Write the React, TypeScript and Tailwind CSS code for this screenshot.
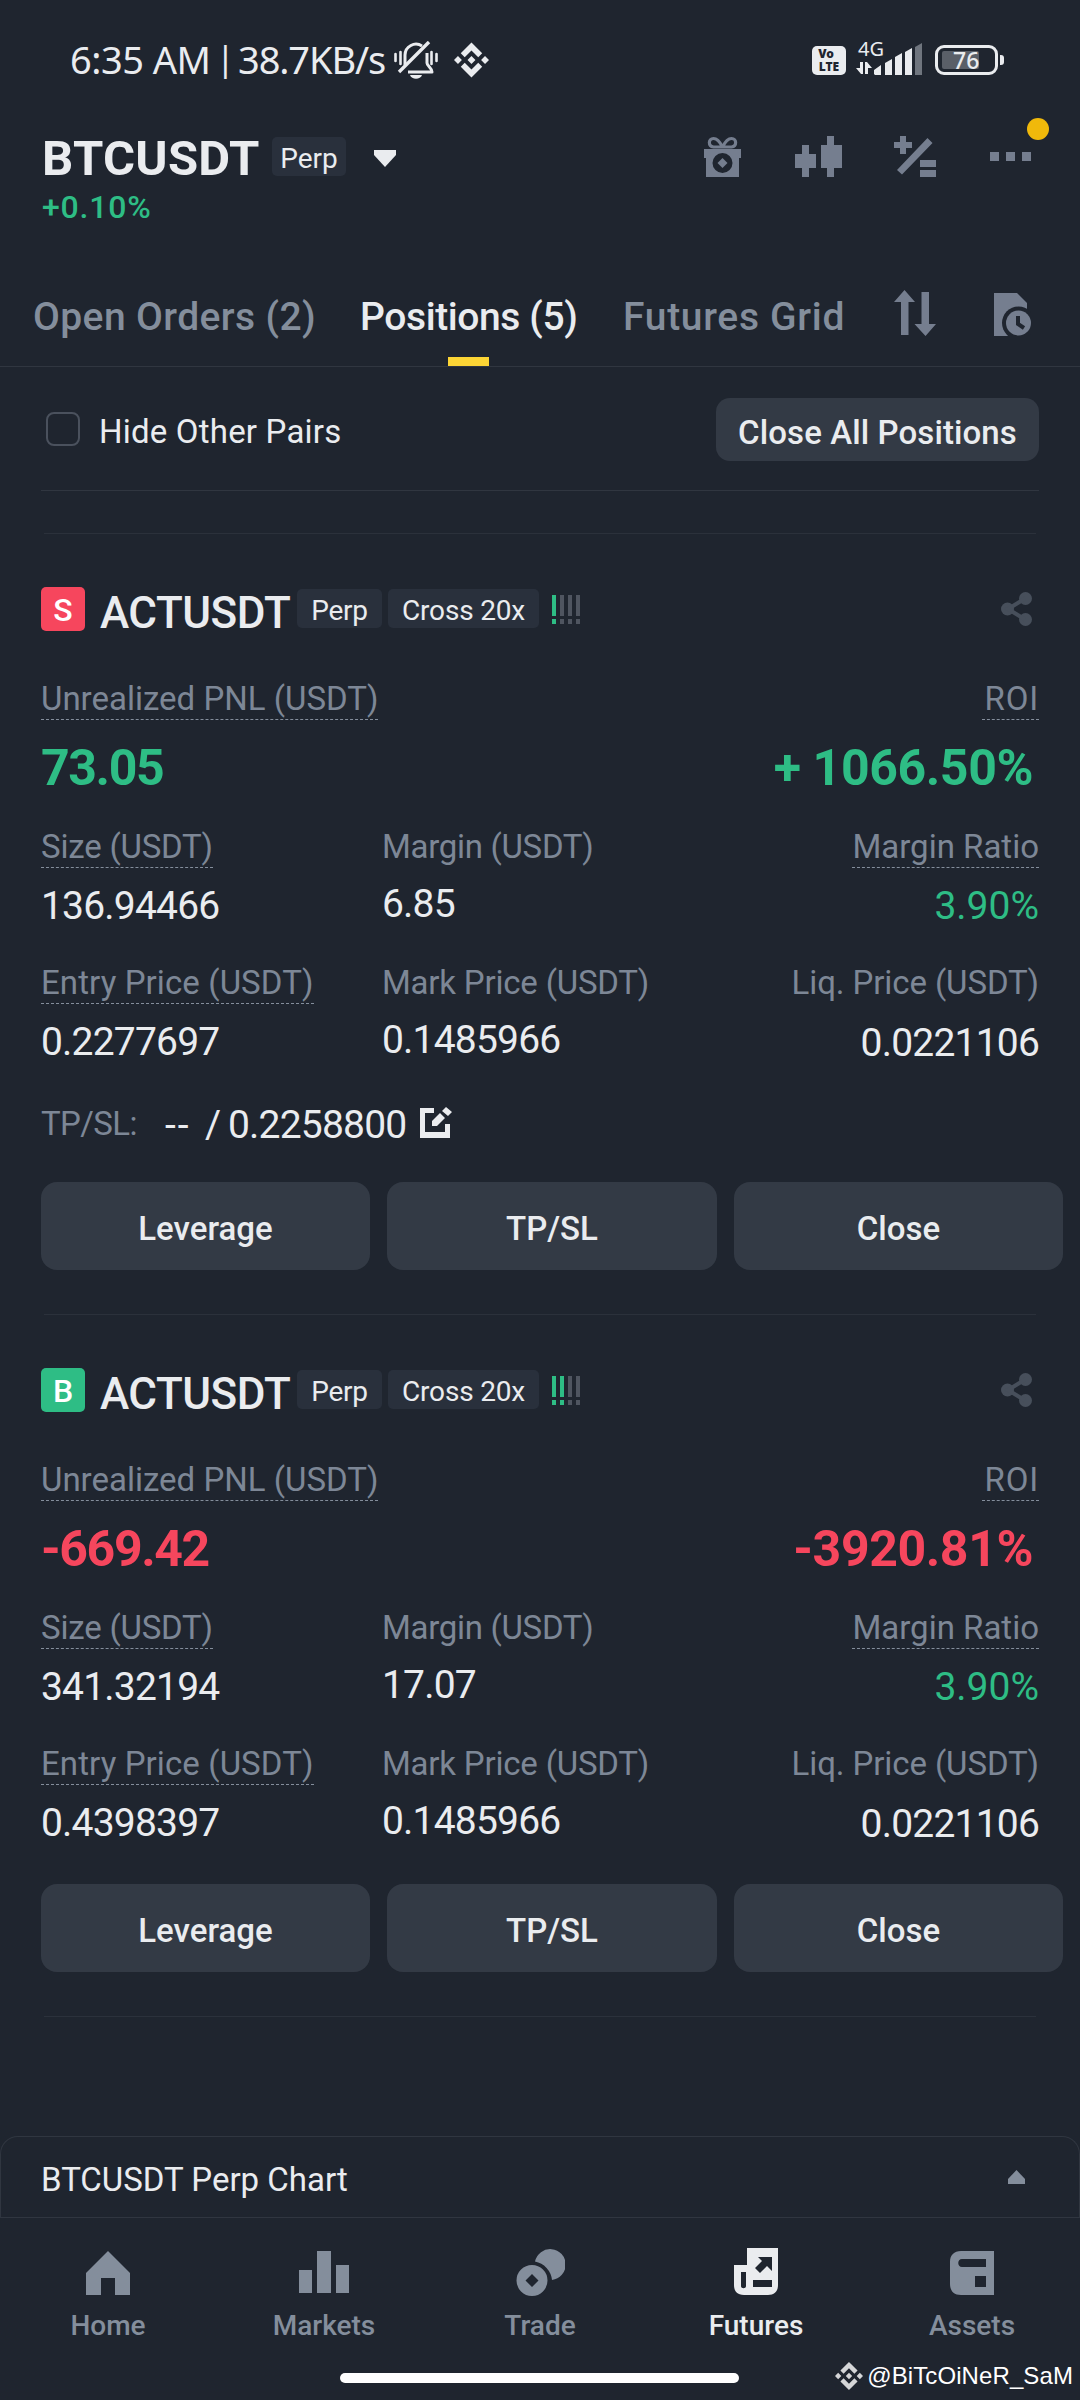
import React from "react";
import { SiBinance } from "react-icons/si";

type Position = {
  side: "S" | "B";
  risk: number;
  pnl: string;
  roi: string;
  size: string;
  margin: string;
  entry: string;
  tpsl?: string;
};

const positions: Position[] = [
  {
    side: "S",
    risk: 1,
    pnl: "73.05",
    roi: "+ 1066.50%",
    size: "136.94466",
    margin: "6.85",
    entry: "0.2277697",
    tpsl: "0.2258800",
  },
  {
    side: "B",
    risk: 2,
    pnl: "-669.42",
    roi: "-3920.81%",
    size: "341.32194",
    margin: "17.07",
    entry: "0.4398397",
  },
];

function StatusBar() {
  return (
    <div className="flex h-[120px] items-center pl-[70px] pr-[76px] text-[#eaecef]">
      <div className="flex -mt-[3px] text-[38px] leading-none font-['Noto_Sans',sans-serif] whitespace-nowrap">
        <span className="w-[146px] tracking-[-0.5px]">6:35 AM</span>
        <span className="w-[22px] -mt-px text-[34px] leading-[38px]">|</span>
        <span className="w-[156px] tracking-[-1.1px]">38.7KB/s</span>
      </div>
      <svg width="44" height="38" viewBox="0 0 44 38" fill="none" stroke="currentColor" strokeWidth="3">
        <path d="M11 24V14a11 11 0 0 1 17-9M33 12v10c0 3 5 5 5 9H14" strokeLinejoin="round" />
        <path d="M5 31 35 1" strokeWidth="3.4" />
        <path d="M1.5 13v7M6.5 11v12M37.500 11v12M42.500 13v7" strokeWidth="2.6" strokeLinecap="round" />
        <path d="M16 34h12c-1.500 5-10.500 5-12 0z" fill="currentColor" stroke="none" />
      </svg>
      <SiBinance className="ml-4 h-[36px] w-[35px]" />
      <div className="ml-auto flex items-center">
        <div className="flex h-[29px] w-[34px] flex-col items-center justify-center rounded-[5px] bg-[#eaecef] font-['Noto_Sans',sans-serif] font-black text-[#1f252f]">
          <span className="-ml-1.5 text-[12px] leading-[13px]">Vo</span>
          <span className="text-[12px] leading-[13px]">LTE</span>
        </div>
        <div className="relative ml-2.5 h-[36px] w-[67px] -mt-1">
          <span className="absolute left-0.5 -top-px text-[20px] leading-[20px] font-['Noto_Sans',sans-serif]">4G</span>
          <svg width="67" height="36" viewBox="0 0 67 36" fill="currentColor">
            <path d="M4 22h3v12H5L0 28h4zM9 22h2l5 6h-4v6H9z" />
            <path d="M18 34v-4l7-5v10h-6zM29 35V23l7-4v16zM39 35V17l7-4v22zM49 35V12l7-4v27z" />
            <path d="M59 35V7l7-4v32z" fill="#6f757e" />
          </svg>
        </div>
        <div className="ml-3 flex h-[30px] w-[63px] items-center rounded-[9px] border-3 border-[#eaecef] pl-1">
          <div className="h-[18px] w-[37px] rounded-[2px] bg-[#5a5f68] pl-[11px] text-[23px] font-medium leading-[18px] font-['Noto_Sans',sans-serif]">
            76
          </div>
        </div>
        <div className="ml-0.5 h-2.5 w-1 rounded-r-[3px] bg-[#eaecef]"></div>
      </div>
    </div>
  );
}

function Header() {
  return (
    <div className="h-[146px] pl-[42px]">
      <div className="flex h-[76px] items-center">
        <h1 className="w-[230px] text-[49px] font-bold leading-none tracking-[0.3px]">BTCUSDT</h1>
        <span className="-mt-[3px] h-[39px] w-[74px] rounded-[5px] bg-[#29303c] pt-[3px] text-center text-[28px] leading-[38px]">
          Perp
        </span>
        <svg className="ml-7" width="22" height="17" viewBox="0 0 22 17" fill="#eaecef">
          <path d="M0 0h22v5L11 17 0 5z" />
        </svg>
        <div className="relative ml-auto mr-[49px] -mt-[3px] flex items-center text-[#757e8f]">
          <svg width="37" height="41" viewBox="0 0 37 41" fill="currentColor">
            <path
              d="M18.500 11C15 4 12 2.500 9.500 2.500c-5.500 0-5.500 8 0 8.500zM18.500 11C22 4 25 2.500 27.500 2.500c5.500 0 5.500 8 0 8.500z"
              fill="none"
              stroke="currentColor"
              strokeWidth="3.2"
            />
            <path
              fillRule="evenodd"
              d="M0 13h37v9h-2v19H2V22H0zM18.500 17a10 10 0 1 0 0 20 10 10 0 1 0 0-20z"
            />
            <path d="m18.500 22 5 5-5 5-5-5z" />
          </svg>
          <svg className="ml-[54px]" width="47" height="41" viewBox="0 0 47 41" fill="currentColor">
            <path d="M7 9h7v9h7v14h-7v9H7v-9H0V18h7zM32 0h7v9h8v23h-8v9h-7v-9h-6V9h6z" />
          </svg>
          <svg className="ml-[52px]" width="42" height="41" viewBox="0 0 42 41" fill="currentColor">
            <path d="M6 0h6v6h6v6h-6v6H6v-6H0V6h6zM33.500 2 38.500 7 8 38.500 3 34zM26 24h16v7H26zM26 34h16v7H26z" />
          </svg>
          <svg className="ml-[54px]" width="41" height="9" viewBox="0 0 41 9" fill="currentColor">
            <path d="M0 0h9v9H0zM16 0h9v9h-9zM32 0h9v9h-9z" />
          </svg>
          <span className="absolute -right-[18px] -top-[18px] size-[22px] rounded-full bg-[#f0b90b]"></span>
        </div>
      </div>
      <p className="-mt-px text-[32px] font-medium leading-6 tracking-[0.8px] text-[#2ebd85]">+0.10%</p>
    </div>
  );
}

function Tabs() {
  return (
    <div className="flex h-[101px] items-center border-b border-[#303640] pl-[33px] pr-[49px] text-[39px] font-medium text-[#848e9c] whitespace-nowrap">
      <span className="w-[327px] pt-0.5 tracking-[0.4px]">Open Orders (2)</span>
      <span className="relative flex h-full w-[263px] items-center pt-0.5 tracking-[-0.4px] text-[#eaecef]">
        Positions (5)
        <span className="absolute bottom-0 left-[88px] h-[9px] w-[41px] bg-[#fcd535]"></span>
      </span>
      <span className="pt-0.5 tracking-[0.7px]">Futures Grid</span>
      <svg className="ml-auto -mt-1.5" width="42" height="46" viewBox="0 0 42 46" fill="#757e8f">
        <path d="M10.500 0 21 12h-6.500v33H7V12H0zM27.500 2h7.500v32h7L31.500 46 20.500 34h7z" />
      </svg>
      <svg className="ml-[58px] -mt-1" width="37" height="43" viewBox="0 0 37 43">
        <path d="M0 0h23l10 10v33H0z" fill="#757e8f" />
        <circle cx="24.500" cy="30" r="16.500" fill="#1f252f" />
        <circle cx="24.500" cy="30" r="12.500" fill="#757e8f" />
        <path d="M24 23v8l6 4" fill="none" stroke="#1f252f" strokeWidth="4" />
      </svg>
    </div>
  );
}

function Filters() {
  return (
    <div className="mx-[41px] flex h-[124px] items-start border-b border-[#303640] text-[33px]">
      <div className="ml-[5px] mt-[45px] size-[34px] rounded-[8px] border-2 border-[#4a515d]"></div>
      <span className="ml-[19px] mt-[45px] leading-10 tracking-[0.2px]">Hide Other Pairs</span>
      <button className="ml-auto mt-[31px] h-[63px] w-[323px] rounded-[14px] bg-[#333a45] pt-1.5 font-medium tracking-[0.1px]">
        Close All Positions
      </button>
    </div>
  );
}

function Label({ children, dashed }: { children: React.ReactNode; dashed?: boolean }) {
  return (
    <div
      className={
        dashed
          ? "h-[41px] border-b border-dashed border-[#848e9c] text-[33px] leading-10 text-[#7d8796]"
          : "h-[41px] text-[33px] leading-10 text-[#7d8796]"
      }
    >
      {children}
    </div>
  );
}

function RiskBars({ level }: { level: number }) {
  return (
    <div className="ml-[13px] flex gap-1">
      {[1, 2, 3, 4].map((n) => (
        <div key={n} className="flex flex-col gap-[3px]">
          <span className={n <= level ? "h-[21px] w-1 bg-[#2ebd85]" : "h-[21px] w-1 bg-[#4f5560]"}></span>
          <span className={n <= level ? "h-[5px] w-1 bg-[#2ebd85]" : "h-[5px] w-1 bg-[#4f5560]"}></span>
        </div>
      ))}
    </div>
  );
}

function PositionCard({ p }: { p: Position }) {
  const short = p.side === "S";
  return (
    <div className="pl-[41px] pt-[53px]">
      <div className="flex h-11 items-center">
        <span
          className={
            short
              ? "size-11 rounded-[5px] bg-[#f6465d] text-center text-[32px] font-medium leading-[46px] text-white"
              : "size-11 rounded-[5px] bg-[#2ebd85] text-center text-[32px] font-medium leading-[46px] text-white"
          }
        >
          {p.side}
        </span>
        <h2 className="ml-[15px] mt-2 w-[197px] text-[44px] font-medium leading-none tracking-[-0.5px]">
          ACTUSDT
        </h2>
        <span className="-mt-px h-[39px] w-[85px] rounded-[5px] bg-[#29303c] pt-[3px] text-center text-[28px] leading-[38px] tracking-[-0.2px]">
          Perp
        </span>
        <span className="-mt-px ml-1.5 h-[39px] w-[151px] rounded-[5px] bg-[#29303c] pt-[3px] text-center text-[28px] leading-[38px] tracking-[-0.2px]">
          Cross 20x
        </span>
        <RiskBars level={p.risk} />
        <svg className="ml-auto mr-12" width="31" height="34" viewBox="0 0 31 34" fill="#474f5b">
          <circle cx="6.500" cy="17" r="6.500" />
          <circle cx="24.500" cy="6.500" r="6.500" />
          <circle cx="24.500" cy="27.500" r="6.500" />
          <path d="M24 6.500 7 17l17 10.500" fill="none" stroke="#474f5b" strokeWidth="4" />
        </svg>
      </div>

      <div className="mr-[41px] mt-12 flex justify-between">
        <Label dashed>Unrealized PNL (USDT)</Label>
        <Label dashed>
          <span className="pl-[3px] tracking-[0.8px]">ROI</span>
        </Label>
      </div>
      <div
        className={
          short
            ? "mr-[47px] mt-[18px] flex justify-between text-[50px] font-bold leading-[60px] text-[#2ebd85]"
            : "mr-[47px] mt-[18px] flex justify-between text-[50px] font-bold leading-[60px] text-[#f6465d]"
        }
      >
        <span className="tracking-[-1.4px]">{p.pnl}</span>
        <span className="tracking-[-0.4px]">{p.roi}</span>
      </div>

      <div className="mr-[41px] mt-[29px] grid grid-cols-[341px_1fr_auto]">
        <div className="justify-self-start tracking-[-0.2px]">
          <Label dashed>Size (USDT)</Label>
        </div>
        <div className="tracking-[-0.3px]">
          <Label>Margin (USDT)</Label>
        </div>
        <Label dashed>Margin Ratio</Label>
      </div>
      <div className="mr-[41px] mt-4 grid grid-cols-[341px_1fr_auto] text-[39px] leading-[45px] h-11 tracking-[-0.8px]">
        <span>{p.size}</span>
        <span className="-mt-0.5">{p.margin}</span>
        <span className="tracking-[0px] text-[#2ebd85]">3.90%</span>
      </div>

      <div className="mr-[41px] mt-[35px] grid grid-cols-[341px_1fr_auto]">
        <div className="justify-self-start tracking-[0.1px]">
          <Label dashed>Entry Price (USDT)</Label>
        </div>
        <div className="tracking-[-0.2px]">
          <Label>Mark Price (USDT)</Label>
        </div>
        <div className="tracking-[-0.1px]">
          <Label>Liq. Price (USDT)</Label>
        </div>
      </div>
      <div className="mr-[41px] mt-4 grid grid-cols-[341px_1fr_auto] text-[39px] leading-[45px] h-11 tracking-[-0.8px]">
        <span>{p.entry}</span>
        <span className="-mt-0.5">0.1485966</span>
        <span className="pt-px">0.0221106</span>
      </div>

      {p.tpsl && (
        <div className="mt-[38px] flex h-11 items-center">
          <span className="w-[124px] text-[33px] tracking-[-0.6px] text-[#7d8796]">TP/SL:</span>
          <span className="flex w-[63px] pt-0.5 text-[39px]">
            <span className="w-10 tracking-[2px]">--</span>
            <span>/</span>
          </span>
          <span className="pt-0.5 text-[39px] tracking-[-0.8px]">{p.tpsl}</span>
          <svg className="-mt-1 ml-[14px]" width="32" height="31" viewBox="0 0 32 31" fill="#eaecef">
            <path d="M0 1h14v5H5v19h20v-8h5v14H0z" />
            <path d="M12 19v-5l8-8 5 5-8 8zM22 4l4-4 6 5-4 4z" />
          </svg>
        </div>
      )}

      <div
        className={
          p.tpsl
            ? "mt-9 flex h-[88px] gap-[17px] text-[33px] font-medium"
            : "mt-[39px] flex h-[88px] gap-[17px] text-[33px] font-medium"
        }
      >
        <button className="w-[329px] rounded-2xl bg-[#333a45] pt-1.5">Leverage</button>
        <button className="w-[330px] rounded-2xl bg-[#333a45] pt-1.5">TP/SL</button>
        <button className="w-[329px] rounded-2xl bg-[#333a45] pt-1.5">Close</button>
      </div>
      <div className="ml-[3px] mr-11 mt-11 h-px bg-[#2b313b]"></div>
    </div>
  );
}

function NavItem({ name, active, children }: { name: string; active?: boolean; children: React.ReactNode }) {
  return (
    <div
      className={
        active
          ? "flex flex-1 flex-col items-center text-[#eaecef]"
          : "flex flex-1 flex-col items-center text-[#848e9c]"
      }
    >
      <svg className="mt-[30px]" width="50" height="48" viewBox="0 0 50 48" fill="currentColor" fillRule="evenodd">
        {children}
      </svg>
      <span className="mt-[14px] text-[28px] font-medium leading-8">{name}</span>
    </div>
  );
}

function BottomNav() {
  return (
    <div className="flex h-[183px] border-t border-[#303640]">
      <NavItem name="Home">
        <path d="M25 3 47 25v22H32V30H18v17H3V25z" />
      </NavItem>
      <NavItem name="Markets">
        <path d="M0 22h13v23H0zM18 3h14v42H18zM37 17h13v28H37z" />
      </NavItem>
      <NavItem name="Trade">
        <path d="M17 17a15.500 15.500 0 1 0 0 31 15.500 15.500 0 1 0 0-31zM17 26l6.500 6.500L17 39l-6.500-6.500z" />
        <path d="M20 13.500A15.500 15.500 0 1 1 37 32 21 21 0 0 0 20 13.500z" />
      </NavItem>
      <NavItem name="Futures" active>
        <path d="M16 0h31v37c0 7-4 10-10 10H13C6 47 3 43 3 37V17h13zM10 24v14c0 3 5 3 5 0V24zM22 32v7h19v-7zM27 9l4 4-7 7 5 5 7-7 5 5V9z" />
      </NavItem>
      <NavItem name="Assets">
        <path d="M14 3h33v44H14C7 47 3 43 3 36V14C3 7 7 3 14 3zM15 11c-5 0-5 8 0 8h24v-8zM28 28v11h11V28z" />
      </NavItem>
    </div>
  );
}

export default function App() {
  return (
    <div className="relative h-[2400px] w-[1080px] overflow-hidden bg-[#1f252f] font-[Roboto,sans-serif] text-[#eaecef]">
      <StatusBar />
      <Header />
      <Tabs />
      <Filters />
      <div className="mx-11 mt-[42px] h-px bg-[#2b313b]"></div>
      {positions.map((p) => (
        <PositionCard key={p.side} p={p} />
      ))}
      <div className="mt-[119px] flex h-[81px] items-center justify-between rounded-t-[18px] border border-b-0 border-[#303640] pl-10 pr-[54px] pt-1.5 text-[33px]">
        <span>BTCUSDT Perp Chart</span>
        <svg className="-mt-1.5" width="17" height="14" viewBox="0 0 17 14" fill="#848e9c">
          <path d="M8.500 0 17 9v5H0V9z" />
        </svg>
      </div>
      <BottomNav />
      {/* gesture bar and watermark float over the nav */}
      <div className="absolute bottom-[17px] left-[340px] h-2.5 w-[399px] rounded-full bg-white"></div>
      <div className="absolute bottom-[9px] right-[7px] flex items-center text-[24px] leading-[30px] text-white font-['Liberation_Sans',sans-serif]">
        <SiBinance className="mr-1 size-7 text-[#d5d6d8]" />
        <span className="tracking-[0.1px]">@BiTcOiNeR_SaM</span>
      </div>
    </div>
  );
}
